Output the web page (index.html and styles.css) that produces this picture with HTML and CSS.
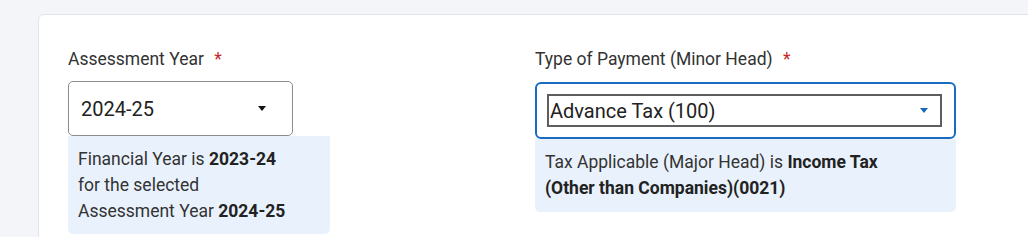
FILE: index.html
```html
<!DOCTYPE html>
<html lang="en">
<head>
    <meta charset="UTF-8">
    <meta name="viewport" content="width=device-width, initial-scale=1.0">
    <title>Challan Payment</title>
    <link rel="stylesheet" href="styles.css">
</head>
<body>
    <div class="card">
        <div class="field field-year">
            <label class="label">Assessment Year <span class="req">*</span></label>
            <div class="select select-year">
                <span>2024-25</span>
                <span class="caret"></span>
            </div>
            <div class="hint hint-year">
                Financial Year is <b>2023-24</b><br>
                for the selected<br>
                Assessment Year <b>2024-25</b>
            </div>
        </div>

        <div class="field field-payment">
            <label class="label">Type of Payment (Minor Head) <span class="req">*</span></label>
            <div class="select-focus">
                <div class="select-inner">
                    <span>Advance Tax (100)</span>
                    <span class="caret caret-blue"></span>
                </div>
            </div>
            <div class="hint hint-payment">
                Tax Applicable (Major Head) is <b>Income Tax</b><br>
                <b>(Other than Companies)(0021)</b>
            </div>
        </div>
    </div>
</body>
</html>
```

FILE: styles.css
```css
body {
    margin: 0;
    padding: 14px 0 0 38px;
    height: 237px;
    box-sizing: border-box;
    overflow: hidden;
    background: #f3f5f9;
    font-family: 'Roboto', 'Liberation Sans', sans-serif;
    color: #333333;
}
.card {
    display: flex;
    width: 1100px;
    min-height: 300px;
    padding: 32px 30px 0 29px;
    background: #ffffff;
    border: 1px solid #e0e3e8;
    border-radius: 6px;
}
.field-year {
    width: 467px;
}
.field-payment {
    width: 421px;
}
.label {
    display: block;
    font-size: 17.5px;
    line-height: 24px;
    color: #333333;
    margin-bottom: 10px;
}
.field-payment .label {
    margin-bottom: 11px;
}
.req {
    color: #c62828;
    margin-left: 6px;
}
.select {
    display: flex;
    align-items: center;
    justify-content: space-between;
    box-sizing: border-box;
    width: 225px;
    height: 55px;
    padding: 0 26px 0 12px;
    border: 1px solid #8c8c8c;
    border-radius: 5px;
    font-size: 20px;
    color: #222222;
}
.caret {
    width: 0;
    height: 0;
    border-left: 4px solid transparent;
    border-right: 4px solid transparent;
    border-top: 5px solid #111111;
}
.caret-blue {
    border-top-color: #1a66b8;
}
.select-focus {
    box-sizing: border-box;
    width: 421px;
    padding: 10px 12px 10px 10px;
    border: 2px solid #1a6bc2;
    border-radius: 6px;
}
.select-inner {
    display: flex;
    align-items: center;
    justify-content: space-between;
    box-sizing: border-box;
    height: 33px;
    padding: 0 12px 0 1px;
    border: 2px solid #5e5e5e;
    font-size: 20px;
    color: #222222;
}
.hint {
    box-sizing: border-box;
    padding: 10px;
    background: #e9f2fc;
    border-radius: 0 0 5px 5px;
    font-size: 17.5px;
    line-height: 26px;
    color: #333333;
}
.hint b {
    color: #222222;
    font-weight: 700;
}
.hint-year {
    width: 262px;
}
.hint-payment {
    width: 421px;
    padding-bottom: 11px;
}
```
